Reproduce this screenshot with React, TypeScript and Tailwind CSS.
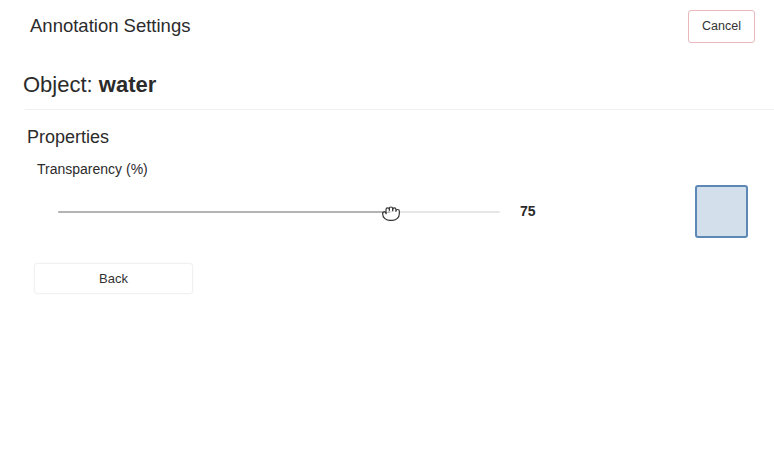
import { HandGrab } from "lucide-react";

// ── Transparency slider ───────────────────────────────────────────────────────

function TransparencySlider({ value }: { value: number }) {
  const pct = value;
  return (
    <div className="relative w-[442px] h-[20px] flex items-center">
      <div className="w-full h-[2px] bg-[#e6e6e6] rounded" />
      <div
        className="absolute left-0 h-[2px] bg-[#b3b3b3] rounded"
        style={{ width: `${pct}%` }}
      />
      <div
        className="absolute top-[0px] -ml-[9px]"
        style={{ left: `${pct}%` }}
      >
        <HandGrab size={20} strokeWidth={1.4} fill="#ffffff" color="#333333" />
      </div>
    </div>
  );
}

// ── Page ──────────────────────────────────────────────────────────────────────

export default function App() {
  return (
    <div
      className="w-[774px] h-[451px] bg-white text-[#2b2b2b] overflow-hidden"
      style={{ fontFamily: '"Liberation Sans", Arial, sans-serif' }}
    >
      {/* Header */}
      <div className="flex items-start justify-between pl-[30px] pr-[19px] pt-[10px]">
        <h1 className="text-[18.5px] leading-[30px] pt-[1px]">Annotation Settings</h1>
        <button className="w-[67px] h-[33px] rounded-[3px] border border-[#e9b9bd] text-[12.5px] text-[#333]">
          Cancel
        </button>
      </div>

      {/* Object name */}
      <div className="pl-[23px] pt-[29px] pb-[11px] text-[22px] leading-[26px]">
        <span>Object: </span>
        <span className="font-bold">water</span>
      </div>
      <div className="ml-[25px] h-px bg-[#f0f0f0]" />

      {/* Properties */}
      <div className="pl-[27px] pt-[15px]">
        <h2 className="text-[18px] leading-[24px]">Properties</h2>
        <div className="pl-[10px] pt-[12px] text-[14px] leading-[16px]">
          Transparency (%)
        </div>

        <div className="flex items-center pt-[8px]">
          <div className="pl-[31px]">
            <TransparencySlider value={75} />
          </div>
          <span className="ml-[20px] text-[14px] font-bold">75</span>
          <div className="ml-auto mr-[26px] w-[53px] h-[53px] rounded-[3px] border-2 border-[#5d88b6] bg-[#d3e0ec]" />
        </div>

        <button className="mt-[25px] ml-[7px] w-[159px] h-[31px] rounded-[3px] border border-[#f1f1f1] shadow-[0_0_2px_rgba(0,0,0,0.06)] text-[13px] text-[#333]">
          Back
        </button>
      </div>
    </div>
  );
}
